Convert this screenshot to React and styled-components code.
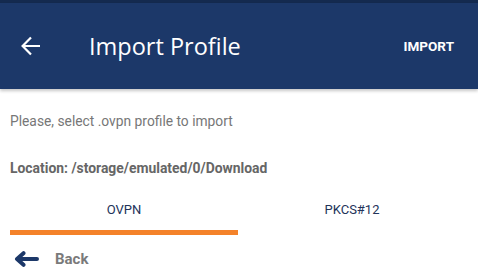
import React from "react";
import styled, { createGlobalStyle } from "styled-components";

const Global = createGlobalStyle`
  html, body { margin: 0; padding: 0; background: #ffffff; }
  body { font-family: Roboto, "Liberation Sans", sans-serif; }
`;

const Screen = styled.div`
  width: 478px;
  height: 280px;
  background: #ffffff;
  display: flex;
  flex-direction: column;
  overflow: hidden;
`;

const StatusBar = styled.div`
  height: 3px;
  background: #142a4f;
`;

const Toolbar = styled.header`
  height: 86px;
  background: #1c3869;
  display: flex;
  align-items: center;
  padding: 0 24px 0 17px;
  box-shadow: 0 2px 3px rgba(0, 0, 0, 0.22);
  position: relative;
  z-index: 1;
`;

const IconButton = styled.button`
  width: 28px;
  height: 28px;
  padding: 0;
  border: 0;
  background: none;
  display: flex;
  align-items: center;
  justify-content: center;
  margin-right: 44px;
`;

const Title = styled.h1`
  flex: 1;
  margin: 0;
  color: #ffffff;
  font-family: "Open Sans", Lato, sans-serif;
  font-weight: 400;
  font-size: 23.5px;
`;

const Action = styled.span`
  color: #ffffff;
  font-family: Roboto, sans-serif;
  font-weight: 700;
  font-size: 13.5px;
`;

const Body = styled.main`
  display: flex;
  flex-direction: column;
  padding: 0 10px;
`;

const Hint = styled.p`
  margin: 24px 0 0;
  color: #777777;
  font-size: 13.8px;
  line-height: 16px;
`;

const Location = styled.p`
  margin: 31px 0 0;
  color: #666666;
  font-weight: 700;
  font-size: 13.9px;
  line-height: 16px;
`;

const Tabs = styled.div`
  display: grid;
  grid-template-columns: 228px 228px;
  margin-top: 26px;
`;

const Tab = styled.div`
  display: flex;
  flex-direction: column;
  align-items: center;
  color: #22335a;
  font-size: 13px;
  line-height: 16px;
  &::after {
    content: "";
    align-self: stretch;
    margin-top: 12px;
    height: 5px;
    background: ${(p) => (p.$active ? "#f4822a" : "transparent")};
  }
`;

const BackRow = styled.div`
  display: flex;
  align-items: center;
  margin-top: 15px;
  padding-left: 4px;
`;

const BackLabel = styled.span`
  margin-left: 16px;
  color: #7a7a7a;
  font-weight: 700;
  font-size: 15px;
`;

export default function App() {
  return (
    <Screen>
      <Global />
      <StatusBar />
      <Toolbar>
        <IconButton aria-label="back">
          <svg width="24" height="24" viewBox="0 0 24 24">
            <path
              d="M21 12H3.8M12 3.5L3.6 12l8.4 8.5"
              fill="none"
              stroke="#ffffff"
              strokeWidth="2.2"
            />
          </svg>
        </IconButton>
        <Title>Import Profile</Title>
        <Action>IMPORT</Action>
      </Toolbar>
      <Body>
        <Hint>Please, select .ovpn profile to import</Hint>
        <Location>Location: /storage/emulated/0/Download</Location>
        <Tabs>
          <Tab $active>OVPN</Tab>
          <Tab>PKCS#12</Tab>
        </Tabs>
        <BackRow>
          <svg width="25" height="16" viewBox="0 0 25 16">
            <path
              d="M23 8H4M9.5 2.2L3 8l6.5 5.8"
              fill="none"
              stroke="#1c3869"
              strokeWidth="4"
              strokeLinecap="round"
              strokeLinejoin="round"
            />
          </svg>
          <BackLabel>Back</BackLabel>
        </BackRow>
      </Body>
    </Screen>
  );
}
